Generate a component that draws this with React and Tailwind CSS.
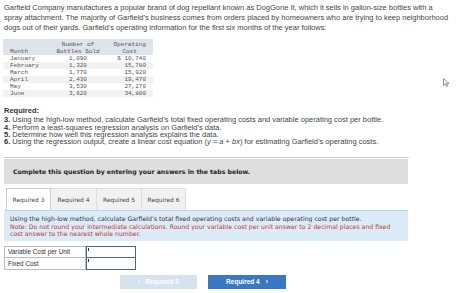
import React from 'react';

const rows = [
  ['January', '1,090', '$ 10,740'],
  ['February', '1,320', '15,780'],
  ['March', '1,770', '15,920'],
  ['April', '2,430', '19,470'],
  ['May', '3,530', '27,270'],
  ['June', '3,620', '34,800'],
];

const sans = "font-['Liberation_Sans',Arial,sans-serif]";
const verdana = "font-['DejaVu_Sans',Verdana,sans-serif]";

export default function App() {
  return (
    <div className="relative w-[474px] h-[293px] overflow-hidden bg-white pl-[4px] pt-[3px] text-[#333]">
      <p className="font-['Liberation_Sans',Arial,sans-serif] text-[7.5px] leading-[10px] w-[466px] text-[#444]">
        Garfield Company manufactures a popular brand of dog repellant known as DogGone It, which it sells in gallon-size bottles with a<br />
        spray attachment. The majority of Garfield’s business comes from orders placed by homeowners who are trying to keep neighborhood<br />
        dogs out of their yards. Garfield’s operating information for the first six months of the year follows:
      </p>

      <table className="mt-[6px] ml-[-1px] w-[150px] font-['Liberation_Mono',monospace] text-[6px] leading-[7px] text-[#555]">
        <thead>
          <tr className="bg-[#dfe3ea]">
            <th className="pl-[7px] pt-[2px] text-left align-bottom font-normal">Month</th>
            <th className="text-center font-normal pt-[2px]">Number of<br />Bottles Sold</th>
            <th className="text-center font-normal pt-[2px]">Operating<br />Cost</th>
          </tr>
        </thead>
        <tbody>
          {rows.map((r, i) => (
            <tr key={r[0]} className={i % 2 ? 'bg-[#f2f2f2]' : 'bg-white'}>
              <td className="pl-[7px]">{r[0]}</td>
              <td className="text-center">{r[1]}</td>
              <td className="text-right pr-[7px]">{r[2]}</td>
            </tr>
          ))}
        </tbody>
      </table>

      <div className={`${sans} mt-[10px] text-[7.5px] leading-[7.3px] text-[#444]`}>
        <div className="font-bold text-[#333] mb-[2px]">Required:</div>
        <div><b className="text-[#333]">3.</b> Using the high-low method, calculate Garfield’s total fixed operating costs and variable operating cost per bottle.</div>
        <div><b className="text-[#333]">4.</b> Perform a least-squares regression analysis on Garfield’s data.</div>
        <div><b className="text-[#333]">5.</b> Determine how well this regression analysis explains the data.</div>
        <div><b className="text-[#333]">6.</b> Using the regression output, create a linear cost equation (<i>y</i> = <i>a</i> + <i>bx</i>) for estimating Garfield’s operating costs.</div>
      </div>

      <div className="w-[405px] h-px bg-[#ccc] mt-[12px]" />

      <div className="w-[404px] mt-px">
        <div className={`${verdana} bg-[#dedede] h-[25px] flex items-center pl-[9px] text-[6.2px] font-bold text-[#222]`}>
          Complete this question by entering your answers in the tabs below.
        </div>

        <div className={`${verdana} flex mt-[4px] pl-[2px] text-[5.9px] text-[#444]`}>
          <div className="w-[45px] h-[22px] flex items-center justify-center bg-white border border-[#ccc] border-b-0">Required 3</div>
          <div className="w-[46px] h-[22px] flex items-center justify-center bg-[#f1f1f1] border border-[#ddd] border-l-0 border-b-0">Required 4</div>
          <div className="w-[45px] h-[22px] flex items-center justify-center bg-[#f1f1f1] border border-[#ddd] border-l-0 border-b-0">Required 5</div>
          <div className="w-[44px] h-[22px] flex items-center justify-center bg-[#f1f1f1] border border-[#ddd] border-l-0 border-b-0">Required 6</div>
        </div>

        <div className={`${verdana} bg-[#dcebf8] border-t border-[#b9d3ec] px-[6px] pt-[4px] pb-[3px] text-[6.2px] leading-[7.5px]`}>
          <div className="text-[#333]">Using the high-low method, calculate Garfield’s total fixed operating costs and variable operating cost per bottle.</div>
          <div className="text-[#c0392b]">Note: Do not round your intermediate calculations. Round your variable cost per unit answer to 2 decimal places and fixed<br />cost answer to the nearest whole number.</div>
        </div>
      </div>

      <div className={`${sans} mt-[5px] w-[132px] text-[6.4px] text-[#333]`}>
        {['Variable Cost per Unit', 'Fixed Cost'].map((l, i) => (
          <div key={l} className="flex h-[12px]">
            <div className={`w-[82px] border border-[#bbb] ${i ? 'border-t-0' : ''} flex items-center pl-[3px]`}>{l}</div>
            <div className={`relative w-[50px] border border-[#4a6589] ${i ? 'border-t-0' : ''}`}>
              <span className="absolute left-[1px] top-[1px] w-[1px] h-[3px] bg-[#333]" />
            </div>
          </div>
        ))}
      </div>

      <div className={`${sans} flex gap-[11px] ml-[116px] mt-[5px] text-[6.5px] font-bold`}>
        <div className="w-[77px] h-[14px] bg-[#d7e2ef] text-white flex items-center justify-center gap-[5px]">
          <span>‹</span><span>Required 3</span>
        </div>
        <div className="w-[78px] h-[14px] bg-[#3a78c3] text-white flex items-center justify-center gap-[6px]">
          <span>Required 4</span><span>›</span>
        </div>
      </div>

      <svg className="absolute left-[443px] top-[78px]" width="7" height="9" viewBox="0 0 7 9">
        <path d="M0.5 0.5 L0.5 7.5 L2.3 5.8 L3.6 8.5 L4.6 8 L3.4 5.4 L6 5.4 Z" fill="white" stroke="#666" strokeWidth="0.7" />
      </svg>
    </div>
  );
}
